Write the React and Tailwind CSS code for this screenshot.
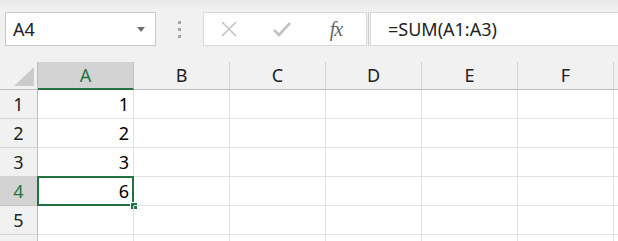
import React from "react";

const COLS = ["A", "B", "C", "D", "E", "F"];
const ROWS = [
  { n: "1", a: "1" },
  { n: "2", a: "2" },
  { n: "3", a: "3" },
  { n: "4", a: "6" },
  { n: "5", a: "" },
  { n: "", a: "" },
];

const font = "font-['Segoe_UI','Noto_Sans','Open_Sans',sans-serif]";

function FormulaBar() {
  return (
    <div className="h-[62px] bg-[linear-gradient(#e9e9e9,#f1f1f1_10px)] pt-[12px] flex items-start">
      {/* Name box */}
      <div className="ml-[5px] w-[151px] h-[34px] bg-white border border-[#c9c9c9] flex items-center justify-between pl-[7px] pr-[10px]">
        <span className="text-[18px] text-[#222] leading-none">A4</span>
        <svg width="8" height="5" viewBox="0 0 8 5">
          <path d="M0 0h8L4 5z" fill="#707070" />
        </svg>
      </div>

      {/* grip dots */}
      <div className="w-[47px] h-[34px] flex flex-col items-center justify-center gap-[4px]">
        <span className="w-[3px] h-[3px] bg-[#a6a6a6]" />
        <span className="w-[3px] h-[3px] bg-[#a6a6a6]" />
        <span className="w-[3px] h-[3px] bg-[#a6a6a6]" />
      </div>

      {/* cancel / enter / fx */}
      <div className="w-[164px] h-[34px] bg-white border border-[#d9d9d9] flex items-center">
        <div className="w-[50px] flex justify-center">
          <svg width="16" height="16" viewBox="0 0 16 16">
            <path d="M1 1L15 15M15 1L1 15" stroke="#c4c4c4" strokeWidth="1.6" fill="none" />
          </svg>
        </div>
        <div className="w-[56px] flex justify-center">
          <svg width="18" height="15" viewBox="0 0 18 15">
            <path d="M1 8l5 5L17 1" stroke="#c4c4c4" strokeWidth="2.6" fill="none" />
          </svg>
        </div>
        <div className="flex-1 flex justify-center pr-[4px]">
          <span className="font-['Liberation_Serif',serif] italic text-[20px] text-[#666] leading-none tracking-[-1px]">
            fx
          </span>
        </div>
      </div>

      <div className="w-[3px] h-[34px] flex justify-center">
        <span className="w-px h-full bg-[#cfcfcf]" />
      </div>

      {/* formula input */}
      <div className="flex-1 h-[34px] bg-white border-y border-l border-[#d9d9d9] flex items-center pl-[17px]">
        <span className="text-[18px] text-[#222] leading-none">=SUM(A1:A3)</span>
      </div>
    </div>
  );
}

function Sheet() {
  return (
    <div className="grid grid-cols-[38px_repeat(6,96px)_1fr] grid-rows-[28px_repeat(6,29px)] bg-white">
      {/* corner */}
      <div className="bg-[#f1f1f1] border-r border-b border-[#bdbdbd] flex items-end justify-end pr-[3px] pb-[3px]">
        <svg width="20" height="19" viewBox="0 0 20 19">
          <path d="M20 0V19H0z" fill="#cbcbcb" />
        </svg>
      </div>
      {COLS.map((c) =>
        c === "A" ? (
          <div
            key={c}
            className="bg-[#d3d3d3] border-r border-[#c6c6c6] border-b-2 border-b-[#217346] flex items-center justify-center text-[18px] text-[#217346]"
          >
            {c}
          </div>
        ) : (
          <div
            key={c}
            className="bg-[#f1f1f1] border-r border-b border-[#d4d4d4] border-b-[#bdbdbd] flex items-center justify-center text-[18px] text-[#222]"
          >
            {c}
          </div>
        )
      )}
      <div className="bg-[#f1f1f1] border-b border-[#bdbdbd]" />

      {ROWS.map((r, i) => (
        <React.Fragment key={i}>
          <div
            className={
              r.n === "4"
                ? "bg-[#d3d3d3] border-r border-b border-[#c6c6c6] flex items-center justify-center text-[18px] text-[#217346]"
                : "bg-[#f1f1f1] border-r border-b border-[#d4d4d4] border-r-[#bdbdbd] flex items-center justify-center text-[18px] text-[#222]"
            }
          >
            {r.n}
          </div>
          {COLS.map((c) => (
            <div
              key={c}
              className="relative border-r border-b border-[#e1e1e1] flex items-center justify-end pr-[4px] text-[18px] text-black"
            >
              {c === "A" ? r.a : ""}
              {c === "A" && r.n === "4" && (
                <>
                  <div className="absolute -left-px -top-px -right-[1px] -bottom-[1px] border-2 border-[#217346]" />
                  <div className="absolute -right-[5px] -bottom-[5px] w-[8px] h-[8px] bg-[#217346] border border-white" />
                </>
              )}
            </div>
          ))}
          <div className="border-b border-[#e1e1e1]" />
        </React.Fragment>
      ))}
    </div>
  );
}

export default function App() {
  return (
    <div className={`w-[618px] h-[241px] overflow-hidden bg-[#f1f1f1] ${font}`}>
      <FormulaBar />
      <Sheet />
    </div>
  );
}
